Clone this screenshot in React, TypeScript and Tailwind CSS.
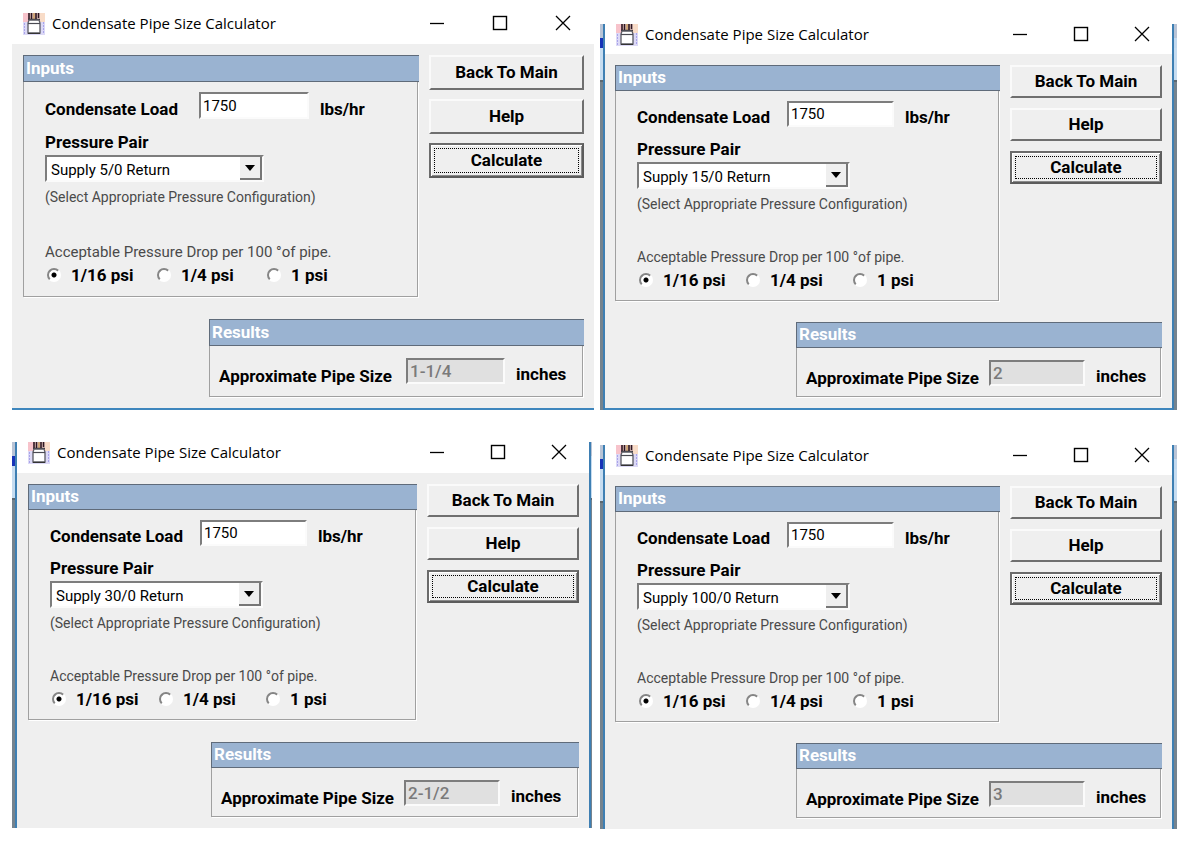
import { useId, useState } from "react";
import clsx from "clsx";

type Size = "large" | "medium" | "small";

interface Scenario {
  id: string;
  pair: string;
  load: string;
  result: string;
  size: Size;
  edges: boolean;
  bottomEdge: boolean;
  className?: string;
}

const scenarios: Scenario[] = [
  { id: "s5", pair: "Supply 5/0 Return", load: "1750", result: "1-1/4", size: "large", edges: false, bottomEdge: true },
  { id: "s15", pair: "Supply 15/0 Return", load: "1750", result: "2", size: "small", edges: true, bottomEdge: true, className: "mt-[19px]" },
  { id: "s30", pair: "Supply 30/0 Return", load: "1750", result: "2-1/2", size: "medium", edges: true, bottomEdge: false, className: "mr-0.5" },
  { id: "s100", pair: "Supply 100/0 Return", load: "1750", result: "3", size: "small", edges: true, bottomEdge: false, className: "mt-[3px]" },
];

const pairs = scenarios.map((s) => s.pair);
const drops = ["1/16 psi", "1/4 psi", "1 psi"];

const sunken =
  "border-2 border-t-[#7d7d7d] border-l-[#7d7d7d] border-r-[#fbfbfb] border-b-[#fbfbfb]";

function AppIcon() {
  return (
    <svg viewBox="0 0 22 22" className="h-[22px] w-[22px] shrink-0">
      <rect width="22" height="22" fill="#dcd9f6" />
      <rect width="6" height="9" fill="#f7c3cb" />
      <rect x="6" width="11" height="8" fill="#e9c9c4" />
      <rect x="17" width="5" height="9" fill="#f8dcc8" />
      <path d="M1.500 10v11M20.500 9v12" stroke="#a9a4ea" strokeDasharray="2 1" />
      <path d="M6 0v6M8.500 0v6M13 0v6M15.500 0v5" stroke="#2b1620" strokeWidth="1.600" />
      <path d="M11 0v6" stroke="#b5822c" />
      <path d="M5 6.500h12" stroke="#2d2830" strokeWidth="1.400" />
      <path d="M6 7h10l1 3v10H5V10z" fill="#fff" stroke="#5a5a62" strokeWidth="1.300" />
      <path d="M5 10.500h12" stroke="#4a4a52" strokeWidth="1.200" />
      <path d="M5 20.500h12" stroke="#333" />
    </svg>
  );
}

function TitleBar({ size }: { size: Size }) {
  const control = clsx(
    "flex h-5 items-center justify-center",
    size === "large" ? "w-[63px]" : "w-[61px]",
  );
  return (
    <header
      className={clsx(
        "flex items-start bg-white pl-[11px] text-black",
        size === "large" && "h-[39px] pt-2",
        size === "medium" && "h-[31px]",
        size === "small" && "h-[30px]",
      )}
    >
      <AppIcon />
      <h2 className="ml-[7px] flex-1 whitespace-nowrap font-['Open_Sans',sans-serif] text-[15px] leading-5">
        Condensate Pipe Size Calculator
      </h2>
      <button type="button" aria-label="Minimize" className={control}>
        <svg viewBox="0 0 16 16" className="h-4 w-4" stroke="currentColor" fill="none">
          <path d="M1 8.500h14" strokeWidth="1.300" />
        </svg>
      </button>
      <button type="button" aria-label="Maximize" className={control}>
        <svg viewBox="0 0 16 16" className="h-4 w-4" stroke="currentColor" fill="none">
          <rect x="1.500" y="1.500" width="13" height="13" strokeWidth="1.400" />
        </svg>
      </button>
      <button type="button" aria-label="Close" className={control}>
        <svg viewBox="0 0 16 16" className="h-4 w-4" stroke="currentColor" fill="none">
          <path d="M1 1l14 14M15 1L1 15" strokeWidth="1.300" />
        </svg>
      </button>
    </header>
  );
}

function Panel({
  title,
  size,
  className,
  children,
}: {
  title: string;
  size: Size;
  className?: string;
  children: React.ReactNode;
}) {
  return (
    <section className={className}>
      <h3
        className={clsx(
          "border-y border-l border-[#5f6b7a] bg-[#9ab3d1] pl-0.5 font-bold text-white",
          size === "large" ? "h-[27px] leading-6" : "h-[26px] leading-[22px]",
        )}
      >
        {title}
      </h3>
      <div className="mr-px border-x border-b border-[#a0a0a0] shadow-[1px_1px_0_#fff]">
        {children}
      </div>
    </section>
  );
}

function ActionButton({
  size,
  focused,
  children,
}: {
  size: Size;
  focused?: boolean;
  children: React.ReactNode;
}) {
  return (
    <button
      type="button"
      className={clsx(
        "w-full border-2 font-bold",
        size === "large" ? "h-[35px]" : "h-[33px]",
        focused
          ? "border-t-[#6b6b6b] border-l-[#6b6b6b] border-r-[#5c5c5c] border-b-[#5c5c5c] p-[3px] shadow-[inset_1px_1px_0_#fff,inset_-1px_-1px_0_#8a8a8a]"
          : "border-t-[#fafafa] border-l-[#fafafa] border-r-[#6f6f6f] border-b-[#6f6f6f]",
      )}
    >
      {focused ? (
        <span className="flex h-full items-center justify-center border border-dotted border-black">
          {children}
        </span>
      ) : (
        children
      )}
    </button>
  );
}

// Sliver of the parent window that shows beside the dialog
function Edge({ side, narrow }: { side: "left" | "right"; narrow?: boolean }) {
  return (
    <div
      className={clsx(
        "flex shrink-0 flex-col",
        narrow ? "w-[3px]" : "w-[5px]",
        side === "left" ? "border-r-2 border-[#3e7fb3]" : "border-l-2 border-[#3e7fb3]",
      )}
    >
      <div className="h-[14px] bg-[#b9c4d6]" />
      <div className={clsx("h-[10px]", side === "left" ? "bg-[#1733b8]" : "bg-[#c3d9ee]")} />
      <div className="h-[34px] border-b-2 border-[#5d6870] bg-[#c6dcf0]" />
      <div className="flex-1 bg-[#75838e]" />
    </div>
  );
}

function CalculatorWindow({ scenario }: { scenario: Scenario }) {
  const { size } = scenario;
  const large = size === "large";
  const uid = useId();
  const [load, setLoad] = useState(scenario.load);
  const [pair, setPair] = useState(scenario.pair);
  const [drop, setDrop] = useState(drops[0]);

  return (
    <article className={clsx("flex", scenario.className)}>
      {scenario.edges && <Edge side="left" />}
      <div
        className={clsx(
          "min-w-0 flex-1 bg-[#efefef]",
          scenario.bottomEdge && "border-b-2 border-[#3e86bd]",
        )}
      >
        <TitleBar size={size} />
        <div className={clsx("py-[11px] pr-2.5", size === "small" ? "pl-2.5" : "pl-[11px]")}>
          <div className="flex items-start gap-2.5">
            <Panel title="Inputs" size={size} className="min-w-0 flex-1">
              <div className={clsx("pl-[21px] pt-2.5", large ? "pb-[11px]" : "pb-2.5")}>
                <div className="flex items-end">
                  <label
                    htmlFor={`${uid}-load`}
                    className={clsx("font-bold leading-5", large ? "w-[154px]" : "w-[150px]")}
                  >
                    Condensate Load
                  </label>
                  <input
                    id={`${uid}-load`}
                    value={load}
                    onChange={(e) => setLoad(e.target.value)}
                    className={clsx(
                      "bg-white pl-0.5 text-[15px]",
                      sunken,
                      large ? "h-[27px] w-[110px]" : "h-[26px] w-[107px]",
                    )}
                  />
                  <span className="ml-[11px] font-bold leading-5">lbs/hr</span>
                </div>

                <label
                  htmlFor={`${uid}-pair`}
                  className={clsx("block font-bold leading-5", large ? "mt-[13px]" : "mt-3")}
                >
                  Pressure Pair
                </label>
                <div
                  className={clsx(
                    "relative mt-[3px] h-[27px] bg-white",
                    sunken,
                    large ? "w-[219px]" : "w-[213px]",
                  )}
                >
                  <select
                    id={`${uid}-pair`}
                    value={pair}
                    onChange={(e) => setPair(e.target.value)}
                    className="h-full w-full appearance-none pl-1 text-[15px]"
                  >
                    {pairs.map((p) => (
                      <option key={p}>{p}</option>
                    ))}
                  </select>
                  <span className="pointer-events-none absolute inset-y-0 right-0 flex w-[22px] items-center justify-center border-r-2 border-b-2 border-[#777] bg-[#efefef]">
                    <svg viewBox="0 0 10 6" className="h-1.5 w-2.5">
                      <path d="M0 0h10L5 6z" />
                    </svg>
                  </span>
                </div>
                <p className="mt-[5px] text-sm leading-5 text-[#4a4a4a]">
                  (Select Appropriate Pressure Configuration)
                </p>

                <fieldset className={large ? "mt-[35px]" : "mt-[33px]"}>
                  <legend
                    className={clsx("leading-5 text-[#4a4a4a]", large ? "text-[15px]" : "text-sm")}
                  >
                    Acceptable Pressure Drop per 100 °of pipe.
                  </legend>
                  <div className="mt-[3px] flex pl-0.5">
                    {drops.map((d) => (
                      <label
                        key={d}
                        className={clsx(
                          "flex items-center gap-2.5 font-bold leading-5",
                          large ? "w-[110px]" : "w-[107px]",
                        )}
                      >
                        <input
                          type="radio"
                          name={`${uid}-drop`}
                          checked={drop === d}
                          onChange={() => setDrop(d)}
                          className="h-3.5 w-3.5 shrink-0 appearance-none rounded-full border-2 border-t-[#858585] border-l-[#858585] border-r-white border-b-white bg-white checked:bg-[radial-gradient(circle,#000_0_2px,#fff_3px)]"
                        />
                        {d}
                      </label>
                    ))}
                  </div>
                </fieldset>
              </div>
            </Panel>

            <div
              className={clsx(
                "flex flex-col",
                large ? "w-[155px] gap-[9px]" : "w-[152px] gap-2.5",
              )}
            >
              <ActionButton size={size}>Back To Main</ActionButton>
              <ActionButton size={size}>Help</ActionButton>
              <ActionButton size={size} focused>
                Calculate
              </ActionButton>
            </div>
          </div>

          <Panel
            title="Results"
            size={size}
            className={clsx(
              "ml-auto",
              large && "mt-[22px] w-[375px]",
              size === "medium" && "mt-[22px] w-[368px]",
              size === "small" && "mt-[21px] w-[366px]",
            )}
          >
            <div className={clsx("flex items-end pl-[9px] pt-3", large ? "pb-3" : "pb-2.5")}>
              <label
                htmlFor={`${uid}-result`}
                className={clsx("font-bold leading-4", large ? "w-[187px]" : "w-[183px]")}
              >
                Approximate Pipe Size
              </label>
              <input
                id={`${uid}-result`}
                value={scenario.result}
                readOnly
                className={clsx(
                  "h-[26px] bg-[#e0e0e0] pl-0.5 font-medium text-[#7a7a7a]",
                  sunken,
                  large ? "w-[99px]" : "w-[96px]",
                )}
              />
              <span className="ml-[11px] font-bold leading-5">inches</span>
            </div>
          </Panel>
        </div>
      </div>
      {scenario.edges && <Edge side="right" narrow={size === "medium"} />}
    </article>
  );
}

export default function App() {
  return (
    <main className="grid grid-cols-[582fr_577fr] items-start gap-x-1.5 gap-y-8 bg-white pt-[5px] pr-[18px] pb-4 pl-3 font-[Roboto,'Liberation_Sans',sans-serif] text-[17px] text-black">
      {scenarios.map((s) => (
        <CalculatorWindow key={s.id} scenario={s} />
      ))}
    </main>
  );
}
